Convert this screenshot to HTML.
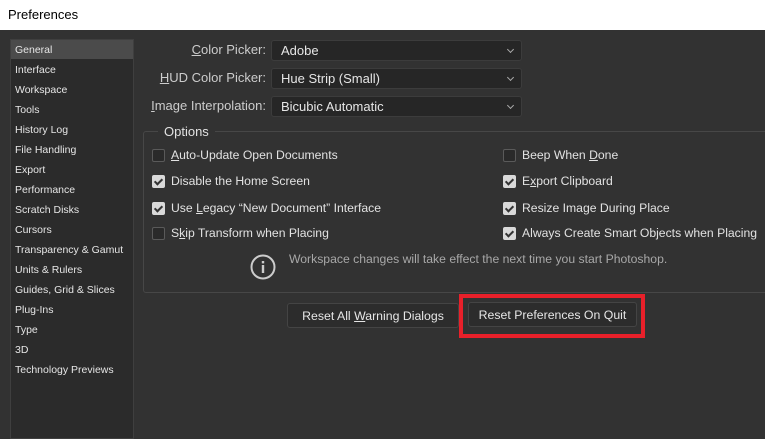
<!DOCTYPE html>
<html><head><style>
*{margin:0;padding:0;box-sizing:border-box}
body{width:765px;height:431px;overflow:hidden;background:#323232;font-family:"Liberation Sans",sans-serif;position:relative;color:#ddd}
.a{position:absolute;white-space:nowrap}
#title{left:0;top:0;width:765px;height:30px;background:#fff;color:#000;font-size:13px;padding:7px 0 0 8px}
#side{left:10px;top:39px;width:124px;height:400px;background:#2b2b2b;border:1px solid #3f3f3f}
.it{position:absolute;left:4px;font-size:10.5px;color:#e6e6e6}
#sel{left:11px;top:40px;width:122px;height:19px;background:#4b4b4b}
.lbl{font-size:13px;color:#ccc;text-align:right;width:125px;left:141px}
.dd{left:271px;width:251px;height:21px;background:#262626;border:1px solid #3c3c3c;border-radius:3px;font-size:13px;color:#e6e6e6;padding:2px 0 0 9px}
.dd:after{content:"";position:absolute;right:8px;top:6px;width:4px;height:4px;border-right:1px solid #aaa;border-bottom:1px solid #aaa;transform:rotate(45deg)}
#grp{left:143px;top:131px;width:640px;height:162px;border:1px solid #474747;border-radius:3px}
.cb{width:13px;height:13px;border:1px solid #5a5a5a;border-radius:2px;background:#2a2a2a}
.cb.on{background:#d9d9d9;border-color:#d9d9d9}
.cb.on:after{content:"";position:absolute;left:3px;top:1px;width:3px;height:6px;border-right:2px solid #333;border-bottom:2px solid #333;transform:rotate(45deg)}
.t{font-size:12.2px;color:#e2e2e2}
.btn{height:25px;background:#2c2c2c;border:1px solid #444;border-radius:3px;font-size:12.3px;color:#e6e6e6;text-align:center;padding-top:5px}
</style></head><body>
<div class="a" id="title">Preferences</div>
<div class="a" id="side"></div>
<div class="a" id="sel"></div>
<div class="a" style="left:11px;top:44px;width:122px;height:340px">
<div class="it" style="top:0">General</div>
<div class="it" style="top:20px">Interface</div>
<div class="it" style="top:40px">Workspace</div>
<div class="it" style="top:60px">Tools</div>
<div class="it" style="top:80px">History Log</div>
<div class="it" style="top:100px">File Handling</div>
<div class="it" style="top:120px">Export</div>
<div class="it" style="top:140px">Performance</div>
<div class="it" style="top:160px">Scratch Disks</div>
<div class="it" style="top:180px">Cursors</div>
<div class="it" style="top:200px">Transparency &amp; Gamut</div>
<div class="it" style="top:220px">Units &amp; Rulers</div>
<div class="it" style="top:240px">Guides, Grid &amp; Slices</div>
<div class="it" style="top:260px">Plug-Ins</div>
<div class="it" style="top:280px">Type</div>
<div class="it" style="top:300px">3D</div>
<div class="it" style="top:320px">Technology Previews</div>
</div>
<div class="a lbl" style="top:42px"><u>C</u>olor Picker:</div>
<div class="a lbl" style="top:70px"><u>H</u>UD Color Picker:</div>
<div class="a lbl" style="top:98px"><u>I</u>mage Interpolation:</div>
<div class="a dd" style="top:40px">Adobe</div>
<div class="a dd" style="top:68px">Hue Strip (Small)</div>
<div class="a dd" style="top:96px">Bicubic Automatic</div>
<div class="a" id="grp"></div>
<div class="a t" style="left:158px;top:124px;background:#323232;padding:0 6px;font-size:13px">Options</div>
<div class="a cb" style="left:152px;top:149px"></div><div class="a t" style="left:171px;top:148px"><u>A</u>uto-Update Open Documents</div>
<div class="a cb on" style="left:152px;top:175px"></div><div class="a t" style="left:171px;top:174px">Disable the Home Screen</div>
<div class="a cb on" style="left:152px;top:202px"></div><div class="a t" style="left:171px;top:201px">Use <u>L</u>egacy “New Document” Interface</div>
<div class="a cb" style="left:152px;top:227px"></div><div class="a t" style="left:171px;top:226px">S<u>k</u>ip Transform when Placing</div>
<div class="a cb" style="left:503px;top:149px"></div><div class="a t" style="left:522px;top:148px">Beep When <u>D</u>one</div>
<div class="a cb on" style="left:503px;top:175px"></div><div class="a t" style="left:522px;top:174px">E<u>x</u>port Clipboard</div>
<div class="a cb on" style="left:503px;top:202px"></div><div class="a t" style="left:522px;top:201px">Resize Image During Place</div>
<div class="a cb on" style="left:503px;top:227px"></div><div class="a t" style="left:522px;top:226px">Always Create Smart Objects when Placing</div>
<svg class="a" style="left:250px;top:254px" width="26" height="26"><circle cx="13" cy="13" r="11.5" fill="none" stroke="#ccc" stroke-width="2"/><rect x="11.8" y="11" width="2.4" height="8" fill="#ccc"/><rect x="11.8" y="7" width="2.4" height="2.4" fill="#ccc"/></svg>
<div class="a t" style="left:289px;top:252px;color:#a8a8a8">Workspace changes will take effect the next time you start Photoshop.</div>
<div class="a btn" style="left:287px;top:303px;width:172px">Reset All <u>W</u>arning Dialogs</div>
<div class="a btn" style="left:468px;top:302px;width:169px">Reset Preferences On Quit</div>
<div class="a" style="left:459px;top:294px;width:186px;height:44px;border:4px solid #e8202a"></div>
</body></html>
